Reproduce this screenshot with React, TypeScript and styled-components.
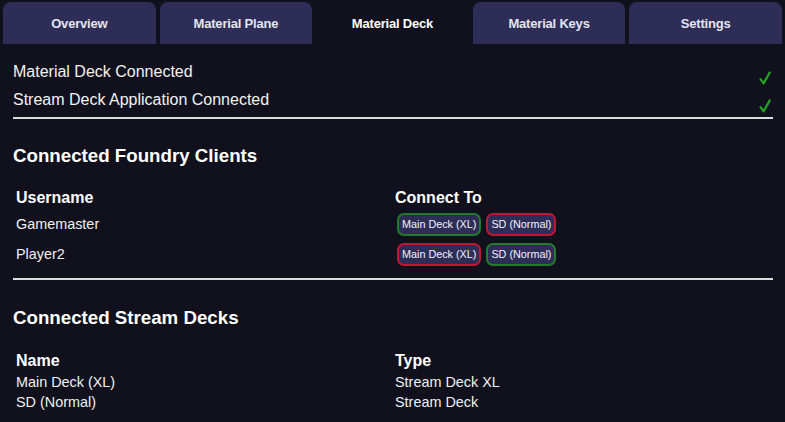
import { Fragment } from "react";
import styled, { createGlobalStyle } from "styled-components";

const GlobalStyle = createGlobalStyle`
  body {
    margin: 0;
    background: #10111d;
    color: #eeeeee;
    font-family: "Liberation Sans", Arial, sans-serif;
  }
`;

type Link = { name: string; ok: boolean };

const tabs = ["Overview", "Material Plane", "Material Deck", "Material Keys", "Settings"];

const clients: { user: string; links: Link[] }[] = [
  { user: "Gamemaster", links: [{ name: "Main Deck (XL)", ok: true }, { name: "SD (Normal)", ok: false }] },
  { user: "Player2", links: [{ name: "Main Deck (XL)", ok: false }, { name: "SD (Normal)", ok: true }] },
];

const decks = [
  { name: "Main Deck (XL)", type: "Stream Deck XL" },
  { name: "SD (Normal)", type: "Stream Deck" },
];

const Check = () => (
  <CheckIcon viewBox="0 0 12 14">
    <path d="M1.5 8.2 L4.6 12.4 L10.8 1.4" />
  </CheckIcon>
);

const App = () => {
  return (
    <Page>
      <GlobalStyle />
      <TabBar>
        {tabs.map((t) => (
          <Tab key={t} $active={t === "Material Deck"}>{t}</Tab>
        ))}
      </TabBar>
      <Content>
        <StatusRow>
          <span>Material Deck Connected</span>
          <Check />
        </StatusRow>
        <StatusRow>
          <span>Stream Deck Application Connected</span>
          <Check />
        </StatusRow>
        <Rule />

        <Heading>Connected Foundry Clients</Heading>
        <Table $top={19}>
          <HeadCell>Username</HeadCell>
          <HeadCell>Connect To</HeadCell>
          {clients.map((c) => (
            <Fragment key={c.user}>
              <Cell $h={30}>{c.user}</Cell>
              <Cell $h={30}>
                <Badges>
                  {c.links.map((l) => (
                    <Badge key={l.name} $ok={l.ok}>{l.name}</Badge>
                  ))}
                </Badges>
              </Cell>
            </Fragment>
          ))}
        </Table>
        <Rule $top={9} />

        <Heading $top={26}>Connected Stream Decks</Heading>
        <Table $top={20}>
          <HeadCell>Name</HeadCell>
          <HeadCell>Type</HeadCell>
          {decks.map((d) => (
            <Fragment key={d.name}>
              <Cell $h={20}>{d.name}</Cell>
              <Cell $h={20}>{d.type}</Cell>
            </Fragment>
          ))}
        </Table>
      </Content>
    </Page>
  );
};

export default App;

const Page = styled.div`
  width: 785px;
  min-height: 422px;
  background: #10111d;
`;

const TabBar = styled.nav`
  display: flex;
  gap: 4px;
  padding: 2px 3px 0;
`;

const Tab = styled.div<{ $active?: boolean }>`
  flex: 1;
  height: 42px;
  display: flex;
  align-items: center;
  justify-content: center;
  border-radius: 8px 8px 0 0;
  background: ${(p) => (p.$active ? "transparent" : "#2e2d58")};
  color: ${(p) => (p.$active ? "#ffffff" : "#e4e4ee")};
  font-size: 13px;
  font-weight: 700;
  letter-spacing: -0.2px;
`;

const Content = styled.main`
  padding: 14px 12px 0 13px;
`;

const StatusRow = styled.div`
  display: flex;
  justify-content: space-between;
  align-items: flex-end;
  height: 28px;
  line-height: 28px;
  font-size: 16px;
  color: #f2f2f2;
`;

const CheckIcon = styled.svg`
  width: 12px;
  height: 14px;
  margin: 0 2px 1px 0;
  fill: none;
  stroke: #25a025;
  stroke-width: 2.2;
  stroke-linecap: round;
  stroke-linejoin: round;
`;

const Rule = styled.hr<{ $top?: number }>`
  border: none;
  height: 2px;
  background: #dcdcdc;
  margin: ${(p) => p.$top ?? 3}px 0 0;
`;

const Heading = styled.h3<{ $top?: number }>`
  margin: ${(p) => p.$top ?? 25}px 0 0;
  font-size: 18.72px;
  line-height: 24px;
  font-weight: 700;
  color: #ffffff;
`;

const Table = styled.div<{ $top?: number }>`
  display: grid;
  grid-template-columns: 1fr 1fr;
  margin-top: ${(p) => p.$top ?? 18}px;
`;

const HeadCell = styled.div`
  padding-left: 3px;
  height: 22px;
  line-height: 22px;
  font-size: 16px;
  font-weight: 700;
  color: #ffffff;
  &:nth-child(2n) {
    padding-left: 2px;
  }
`;

const Cell = styled.div<{ $h: number }>`
  padding-left: 3px;
  height: ${(p) => p.$h}px;
  display: flex;
  align-items: center;
  font-size: 14.4px;
  color: #f0f0f0;
  &:nth-child(2n) {
    padding-left: 2px;
  }
`;

const Badges = styled.div`
  display: flex;
  gap: 5px;
  padding-left: 2px;
`;

const Badge = styled.span<{ $ok: boolean }>`
  display: inline-block;
  padding: 2px 3px;
  line-height: 15px;
  font-size: 10.8px;
  color: #f2f2f8;
  background: #2e2d58;
  border: 2px solid ${(p) => (p.$ok ? "#237a2b" : "#c0182f")};
  border-radius: 7px;
`;
